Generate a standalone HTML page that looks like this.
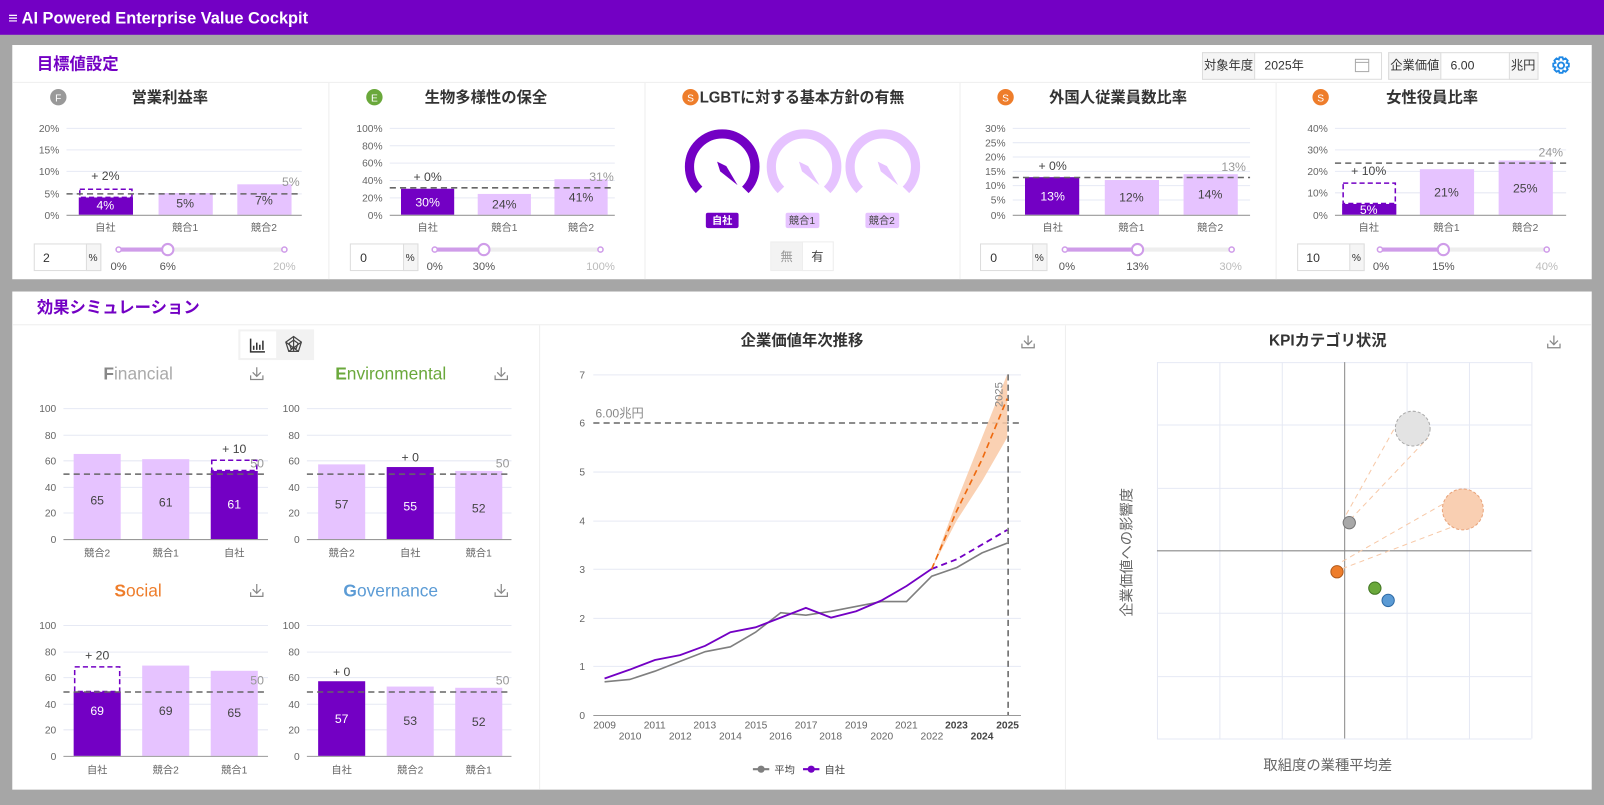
<!DOCTYPE html>
<html><head><meta charset="utf-8"><style>
html,body{margin:0;padding:0;background:#a6a6a6;width:1604px;height:805px;overflow:hidden}
svg{display:block;font-family:"Liberation Sans","Noto Sans CJK JP",sans-serif}
.y{font-size:10px;fill:#666;text-anchor:end}
.x{font-size:10px;fill:#666;text-anchor:middle}
.g{stroke:#e6e9f4;stroke-width:1}
.ax{stroke:#999;stroke-width:1}
.dl{stroke:#666;stroke-width:1.5;stroke-dasharray:6 4}
.c{text-anchor:middle}
.t{font-size:15px;font-weight:bold;fill:#333;text-anchor:middle}
.v{font-size:12px;text-anchor:middle;fill:#444}
.w{font-size:12px;text-anchor:middle;fill:#fff}
</style></head><body>
<svg width="1604" height="805" viewBox="0 0 1568 787" preserveAspectRatio="none">
<defs>
<g id="dl"><path d="M0 -6 V3 M-4 -1 L0 3 L4 -1 M-6 2 V6 H6 V2" fill="none" stroke="#888" stroke-width="1.2"/></g>
</defs>
<rect width="1568" height="787" fill="#a6a6a6"/>
<rect width="1568" height="34" fill="#7300c4"/>
<text x="8" y="23" fill="#fff" font-size="16" font-weight="bold">≡  AI Powered Enterprise Value Cockpit</text>

<!-- Top panel -->
<rect x="12" y="44" width="1544" height="229" fill="#fff"/>
<text x="36" y="68" fill="#7300c4" font-size="16" font-weight="bold">目標値設定</text>
<line x1="12" y1="80.5" x2="1556" y2="80.5" stroke="#eee"/>
<g stroke="#eee"><line x1="321.5" y1="81" x2="321.5" y2="273"/><line x1="630.5" y1="81" x2="630.5" y2="273"/><line x1="938.5" y1="81" x2="938.5" y2="273"/><line x1="1247.5" y1="81" x2="1247.5" y2="273"/></g>

<rect x="1175.5" y="51.5" width="175" height="26" fill="#fff" stroke="#ddd"/>
<rect x="1175.5" y="51.5" width="51" height="26" fill="#f5f5f5" stroke="#ddd"/>
<text x="1201" y="68" font-size="12" fill="#333" class="c">対象年度</text>
<text x="1236" y="68" font-size="12" fill="#333">2025年</text>
<g fill="none" stroke="#aaa"><rect x="1325" y="58" width="13" height="12"/><line x1="1325" y1="61" x2="1338" y2="61"/></g>
<rect x="1357.5" y="51.5" width="146" height="26" fill="#fff" stroke="#ddd"/>
<rect x="1357.5" y="51.5" width="51" height="26" fill="#f5f5f5" stroke="#ddd"/>
<rect x="1475.5" y="51.5" width="28" height="26" fill="#f5f5f5" stroke="#ddd"/>
<text x="1383" y="68" font-size="12" fill="#333" class="c">企業価値</text>
<text x="1418" y="68" font-size="12" fill="#333">6.00</text>
<text x="1489" y="68" font-size="12" fill="#333" class="c">兆円</text>
<g transform="translate(1526,64)" fill="none" stroke="#1e88e5" stroke-width="1.8"><circle r="3"/><path d="M-1.5 -8 h3 l.7 2.2 2.2 -1.1 2.1 2.1 -1.1 2.2 2.2 .7 v3 l-2.2 .7 1.1 2.2 -2.1 2.1 -2.2 -1.1 -.7 2.2 h-3 l-.7 -2.2 -2.2 1.1 -2.1 -2.1 1.1 -2.2 -2.2 -.7 v-3 l2.2 -.7 -1.1 -2.2 2.1 -2.1 2.2 1.1z"/></g>

<!-- Col1 -->
<circle cx="57" cy="95" r="8" fill="#999"/><text x="57" y="99" font-size="10" fill="#fff" class="c">F</text>
<text x="166" y="100" class="t">営業利益率</text>
<g class="g"><line x1="65" y1="125.5" x2="295" y2="125.5"/><line x1="65" y1="146.5" x2="295" y2="146.5"/><line x1="65" y1="167.5" x2="295" y2="167.5"/><line x1="65" y1="189.5" x2="295" y2="189.5"/></g>
<text class="y" x="58" y="129">20%</text><text class="y" x="58" y="150">15%</text><text class="y" x="58" y="171">10%</text><text class="y" x="58" y="193">5%</text><text class="y" x="58" y="214">0%</text>
<rect x="77" y="193" width="53" height="17" fill="#7300c4"/>
<rect x="78" y="185" width="51" height="8" fill="#fff" stroke="#7300c4" stroke-width="1.5" stroke-dasharray="5 3"/>
<rect x="155" y="188.7" width="53" height="21.3" fill="#e6c3ff"/>
<rect x="232" y="180.2" width="53" height="29.8" fill="#e6c3ff"/>
<line x1="65" y1="189.5" x2="295" y2="189.5" class="dl"/>
<line x1="65" y1="210.5" x2="295" y2="210.5" class="ax"/>
<text x="103" y="176" class="v">+ 2%</text><text x="103" y="205" class="w">4%</text><text x="181" y="203" class="v">5%</text><text x="258" y="200" class="v">7%</text>
<text x="293" y="182" font-size="12" fill="#999" text-anchor="end">5%</text>
<text class="x" x="103" y="226">自社</text><text class="x" x="181" y="226">競合1</text><text class="x" x="258" y="226">競合2</text>
<rect x="33.5" y="238.5" width="65" height="26" fill="#fff" stroke="#ddd"/><rect x="84.5" y="238.5" width="14" height="26" fill="#f5f5f5" stroke="#ddd"/>
<text x="42" y="256" font-size="12" fill="#333">2</text><text x="91" y="255" font-size="10" fill="#333" class="c">%</text>
<line x1="116" y1="244" x2="278" y2="244" stroke="#eee" stroke-width="4"/><line x1="116" y1="244" x2="164" y2="244" stroke="#cf9ce9" stroke-width="4"/>
<circle cx="116" cy="244" r="2.5" fill="#fff" stroke="#cf9ce9" stroke-width="1.5"/><circle cx="278" cy="244" r="2.5" fill="#fff" stroke="#cf9ce9" stroke-width="1.5"/><circle cx="164" cy="244" r="5.5" fill="#fff" stroke="#cf9ce9" stroke-width="2"/>
<text x="116" y="264" font-size="11" fill="#555" class="c">0%</text><text x="164" y="264" font-size="11" fill="#555" class="c">6%</text><text x="278" y="264" font-size="11" fill="#bbb" class="c">20%</text>

<!-- Col2 -->
<circle cx="366" cy="95" r="8" fill="#6aa83b"/><text x="366" y="99" font-size="10" fill="#fff" class="c">E</text>
<text x="475" y="100" class="t">生物多様性の保全</text>
<g class="g"><line x1="381" y1="125.5" x2="601" y2="125.5"/><line x1="381" y1="142.5" x2="601" y2="142.5"/><line x1="381" y1="159.5" x2="601" y2="159.5"/><line x1="381" y1="176.5" x2="601" y2="176.5"/><line x1="381" y1="193.5" x2="601" y2="193.5"/></g>
<text class="y" x="374" y="129">100%</text><text class="y" x="374" y="146">80%</text><text class="y" x="374" y="163">60%</text><text class="y" x="374" y="180">40%</text><text class="y" x="374" y="197">20%</text><text class="y" x="374" y="214">0%</text>
<rect x="392" y="184.5" width="52" height="25.5" fill="#7300c4"/>
<rect x="467" y="189.6" width="52" height="20.4" fill="#e6c3ff"/>
<rect x="542" y="175.2" width="52" height="34.8" fill="#e6c3ff"/>
<line x1="381" y1="183.6" x2="601" y2="183.6" class="dl"/>
<line x1="381" y1="210.5" x2="601" y2="210.5" class="ax"/>
<text x="418" y="177" class="v">+ 0%</text><text x="418" y="202" class="w">30%</text><text x="493" y="204" class="v">24%</text><text x="568" y="197" class="v">41%</text>
<text x="600" y="177" font-size="12" fill="#999" text-anchor="end">31%</text>
<text class="x" x="418" y="226">自社</text><text class="x" x="493" y="226">競合1</text><text class="x" x="568" y="226">競合2</text>
<rect x="342.5" y="238.5" width="66" height="26" fill="#fff" stroke="#ddd"/><rect x="394.5" y="238.5" width="14" height="26" fill="#f5f5f5" stroke="#ddd"/>
<text x="352" y="256" font-size="12" fill="#333">0</text><text x="401" y="255" font-size="10" fill="#333" class="c">%</text>
<line x1="425" y1="244" x2="587" y2="244" stroke="#eee" stroke-width="4"/><line x1="425" y1="244" x2="473" y2="244" stroke="#cf9ce9" stroke-width="4"/>
<circle cx="425" cy="244" r="2.5" fill="#fff" stroke="#cf9ce9" stroke-width="1.5"/><circle cx="587" cy="244" r="2.5" fill="#fff" stroke="#cf9ce9" stroke-width="1.5"/><circle cx="473" cy="244" r="5.5" fill="#fff" stroke="#cf9ce9" stroke-width="2"/>
<text x="425" y="264" font-size="11" fill="#555" class="c">0%</text><text x="473" y="264" font-size="11" fill="#555" class="c">30%</text><text x="587" y="264" font-size="11" fill="#bbb" class="c">100%</text>

<!-- Col3 gauges -->
<circle cx="675" cy="95" r="8" fill="#ee7d2b"/><text x="675" y="99" font-size="10" fill="#fff" class="c">S</text>
<text x="684" y="100" font-size="15" font-weight="bold" fill="#333" textLength="200" lengthAdjust="spacingAndGlyphs">LGBTに対する基本方針の有無</text>
<g fill="none" stroke-width="9">
<path d="M683.4 185.6 A32 32 0 1 1 728.6 185.6" stroke="#7300c4"/>
<path d="M763.4 185.6 A32 32 0 1 1 808.6 185.6" stroke="#e6c3ff"/>
<path d="M840.4 185.6 A32 32 0 1 1 885.6 185.6" stroke="#e6c3ff"/>
</g>
<polygon points="701,158 710,162.4 721,181 704,167.6" fill="#7300c4"/>
<polygon points="781,158 790,162.4 801,181 784,167.6" fill="#e6c3ff"/>
<polygon points="858,158 867,162.4 878,181 861,167.6" fill="#e6c3ff"/>
<rect x="690" y="208" width="32" height="15" rx="2" fill="#7300c4"/><text x="706" y="219" font-size="10" fill="#fff" class="c" font-weight="bold">自社</text>
<rect x="768" y="208" width="33" height="15" rx="2" fill="#e6c3ff"/><text x="784" y="219" font-size="10" fill="#444" class="c">競合1</text>
<rect x="846" y="208" width="33" height="15" rx="2" fill="#e6c3ff"/><text x="862" y="219" font-size="10" fill="#444" class="c">競合2</text>
<rect x="753.5" y="236.5" width="61" height="28" fill="#f3f3f3" stroke="#eee"/><rect x="784.5" y="236.5" width="30" height="28" fill="#fff" stroke="#eee"/>
<text x="769" y="255" font-size="12" fill="#999" class="c">無</text><text x="799" y="255" font-size="12" fill="#444" class="c">有</text>

<!-- Col4 -->
<circle cx="983" cy="95" r="8" fill="#ee7d2b"/><text x="983" y="99" font-size="10" fill="#fff" class="c">S</text>
<text x="1093" y="100" class="t">外国人従業員数比率</text>
<g class="g"><line x1="990" y1="125.5" x2="1222" y2="125.5"/><line x1="990" y1="139.5" x2="1222" y2="139.5"/><line x1="990" y1="153.5" x2="1222" y2="153.5"/><line x1="990" y1="167.5" x2="1222" y2="167.5"/><line x1="990" y1="181.5" x2="1222" y2="181.5"/><line x1="990" y1="195.5" x2="1222" y2="195.5"/></g>
<text class="y" x="983" y="129">30%</text><text class="y" x="983" y="143">25%</text><text class="y" x="983" y="157">20%</text><text class="y" x="983" y="171">15%</text><text class="y" x="983" y="185">10%</text><text class="y" x="983" y="199">5%</text><text class="y" x="983" y="214">0%</text>
<rect x="1002" y="173.2" width="53" height="36.8" fill="#7300c4"/>
<rect x="1080" y="176" width="53" height="34" fill="#e6c3ff"/>
<rect x="1157" y="170.3" width="53" height="39.7" fill="#e6c3ff"/>
<line x1="990" y1="173.5" x2="1222" y2="173.5" class="dl"/>
<line x1="990" y1="210.5" x2="1222" y2="210.5" class="ax"/>
<text x="1029" y="166" class="v">+ 0%</text><text x="1029" y="196" class="w">13%</text><text x="1106" y="197" class="v">12%</text><text x="1183" y="194" class="v">14%</text>
<text x="1218" y="167" font-size="12" fill="#999" text-anchor="end">13%</text>
<text class="x" x="1029" y="226">自社</text><text class="x" x="1106" y="226">競合1</text><text class="x" x="1183" y="226">競合2</text>
<rect x="958.5" y="238.5" width="65" height="26" fill="#fff" stroke="#ddd"/><rect x="1009.5" y="238.5" width="14" height="26" fill="#f5f5f5" stroke="#ddd"/>
<text x="968" y="256" font-size="12" fill="#333">0</text><text x="1016" y="255" font-size="10" fill="#333" class="c">%</text>
<line x1="1041" y1="244" x2="1204" y2="244" stroke="#eee" stroke-width="4"/><line x1="1041" y1="244" x2="1112" y2="244" stroke="#cf9ce9" stroke-width="4"/>
<circle cx="1041" cy="244" r="2.5" fill="#fff" stroke="#cf9ce9" stroke-width="1.5"/><circle cx="1204" cy="244" r="2.5" fill="#fff" stroke="#cf9ce9" stroke-width="1.5"/><circle cx="1112" cy="244" r="5.5" fill="#fff" stroke="#cf9ce9" stroke-width="2"/>
<text x="1043" y="264" font-size="11" fill="#555" class="c">0%</text><text x="1112" y="264" font-size="11" fill="#555" class="c">13%</text><text x="1203" y="264" font-size="11" fill="#bbb" class="c">30%</text>

<!-- Col5 -->
<circle cx="1291" cy="95" r="8" fill="#ee7d2b"/><text x="1291" y="99" font-size="10" fill="#fff" class="c">S</text>
<text x="1400" y="100" class="t">女性役員比率</text>
<g class="g"><line x1="1305" y1="125.5" x2="1531" y2="125.5"/><line x1="1305" y1="146.5" x2="1531" y2="146.5"/><line x1="1305" y1="167.5" x2="1531" y2="167.5"/><line x1="1305" y1="188.5" x2="1531" y2="188.5"/></g>
<text class="y" x="1298" y="129">40%</text><text class="y" x="1298" y="150">30%</text><text class="y" x="1298" y="171">20%</text><text class="y" x="1298" y="192">10%</text><text class="y" x="1298" y="214">0%</text>
<rect x="1312" y="199.4" width="53" height="10.6" fill="#7300c4"/>
<rect x="1313" y="179" width="51" height="20" fill="#fff" stroke="#7300c4" stroke-width="1.5" stroke-dasharray="5 3"/>
<rect x="1388" y="165.4" width="53" height="44.6" fill="#e6c3ff"/>
<rect x="1465" y="156.9" width="53" height="53.1" fill="#e6c3ff"/>
<line x1="1305" y1="159.5" x2="1531" y2="159.5" class="dl"/>
<line x1="1305" y1="210.5" x2="1531" y2="210.5" class="ax"/>
<text x="1338" y="171" class="v">+ 10%</text><text x="1338" y="209" class="w">5%</text><text x="1414" y="192" class="v">21%</text><text x="1491" y="188" class="v">25%</text>
<text x="1528" y="153" font-size="12" fill="#999" text-anchor="end">24%</text>
<text class="x" x="1338" y="226">自社</text><text class="x" x="1414" y="226">競合1</text><text class="x" x="1491" y="226">競合2</text>
<rect x="1268.5" y="238.5" width="65" height="26" fill="#fff" stroke="#ddd"/><rect x="1319.5" y="238.5" width="14" height="26" fill="#f5f5f5" stroke="#ddd"/>
<text x="1277" y="256" font-size="12" fill="#333">10</text><text x="1326" y="255" font-size="10" fill="#333" class="c">%</text>
<line x1="1349" y1="244" x2="1512" y2="244" stroke="#eee" stroke-width="4"/><line x1="1349" y1="244" x2="1411" y2="244" stroke="#cf9ce9" stroke-width="4"/>
<circle cx="1349" cy="244" r="2.5" fill="#fff" stroke="#cf9ce9" stroke-width="1.5"/><circle cx="1512" cy="244" r="2.5" fill="#fff" stroke="#cf9ce9" stroke-width="1.5"/><circle cx="1411" cy="244" r="5.5" fill="#fff" stroke="#cf9ce9" stroke-width="2"/>
<text x="1350" y="264" font-size="11" fill="#555" class="c">0%</text><text x="1411" y="264" font-size="11" fill="#555" class="c">15%</text><text x="1512" y="264" font-size="11" fill="#bbb" class="c">40%</text>

<!-- Bottom panel -->
<rect x="12" y="285" width="1544" height="487" fill="#fff"/>
<text x="36" y="306" fill="#7300c4" font-size="16" font-weight="bold">効果シミュレーション</text>
<line x1="12" y1="317.5" x2="1556" y2="317.5" stroke="#eee"/>
<line x1="527.5" y1="318" x2="527.5" y2="772" stroke="#eee"/><line x1="1041.5" y1="318" x2="1041.5" y2="772" stroke="#eee"/>
<rect x="233" y="322" width="74" height="30" fill="#f2f2f2"/><rect x="235" y="324" width="35" height="26" fill="#fff"/>
<path d="M245 331 V344 H259 M248 342 V338 M251 342 V335 M254 342 V337 M257 342 V333" stroke="#333" stroke-width="1.5" fill="none"/>
<g transform="translate(287,337)" fill="none" stroke="#444" stroke-width="1.2"><polygon points="0,-8 7.6,-2.5 4.7,6.5 -4.7,6.5 -7.6,-2.5"/><polygon points="0,-4.5 4.3,-1.4 2.6,3.6 -2.6,3.6 -4.3,-1.4"/><path d="M0 -8 V6.5 M-7.6 -2.5 L4.7 6.5 M7.6 -2.5 L-4.7 6.5"/></g>

<!-- Financial -->
<text x="135" y="371" class="c" font-size="17" fill="#aaa"><tspan fill="#888" font-weight="bold">F</tspan>inancial</text>
<use href="#dl" x="251" y="365"/>
<g class="g"><line x1="62" y1="399.5" x2="262" y2="399.5"/><line x1="62" y1="425.5" x2="262" y2="425.5"/><line x1="62" y1="450.5" x2="262" y2="450.5"/><line x1="62" y1="476.5" x2="262" y2="476.5"/><line x1="62" y1="501.5" x2="262" y2="501.5"/></g>
<text class="y" x="55" y="403">100</text><text class="y" x="55" y="429">80</text><text class="y" x="55" y="454">60</text><text class="y" x="55" y="480">40</text><text class="y" x="55" y="505">20</text><text class="y" x="55" y="531">0</text>
<rect x="72" y="443.8" width="46" height="83.2" fill="#e6c3ff"/><rect x="139" y="448.9" width="46" height="78.1" fill="#e6c3ff"/>
<rect x="206" y="460.4" width="46" height="66.6" fill="#7300c4"/><rect x="207" y="450" width="44" height="10" fill="#fff" stroke="#7300c4" stroke-width="1.5" stroke-dasharray="5 3"/>
<line x1="62" y1="463.5" x2="262" y2="463.5" class="dl"/><line x1="62" y1="527.5" x2="262" y2="527.5" class="ax"/>
<text x="95" y="493" class="v">65</text><text x="162" y="495" class="v">61</text><text x="229" y="497" class="w">61</text>
<text x="229" y="443" class="v">+ 10</text><text x="258" y="457" font-size="12" fill="#999" text-anchor="end">50</text>
<text class="x" x="95" y="544">競合2</text><text class="x" x="162" y="544">競合1</text><text class="x" x="229" y="544">自社</text>

<!-- Environmental -->
<text x="382" y="371" class="c" font-size="17" fill="#6aa83b"><tspan font-weight="bold">E</tspan>nvironmental</text>
<use href="#dl" x="490" y="365"/>
<g class="g"><line x1="300" y1="399.5" x2="500" y2="399.5"/><line x1="300" y1="425.5" x2="500" y2="425.5"/><line x1="300" y1="450.5" x2="500" y2="450.5"/><line x1="300" y1="476.5" x2="500" y2="476.5"/><line x1="300" y1="501.5" x2="500" y2="501.5"/></g>
<text class="y" x="293" y="403">100</text><text class="y" x="293" y="429">80</text><text class="y" x="293" y="454">60</text><text class="y" x="293" y="480">40</text><text class="y" x="293" y="505">20</text><text class="y" x="293" y="531">0</text>
<rect x="311" y="454" width="46" height="73" fill="#e6c3ff"/><rect x="378" y="456.6" width="46" height="70.4" fill="#7300c4"/><rect x="445" y="460.4" width="46" height="66.6" fill="#e6c3ff"/>
<line x1="300" y1="463.5" x2="500" y2="463.5" class="dl"/><line x1="300" y1="527.5" x2="500" y2="527.5" class="ax"/>
<text x="334" y="497" class="v">57</text><text x="401" y="499" class="w">55</text><text x="468" y="501" class="v">52</text>
<text x="401" y="451" class="v">+ 0</text><text x="498" y="457" font-size="12" fill="#999" text-anchor="end">50</text>
<text class="x" x="334" y="544">競合2</text><text class="x" x="401" y="544">自社</text><text class="x" x="468" y="544">競合1</text>

<!-- Social -->
<text x="135" y="583" class="c" font-size="17" fill="#ee7d2b"><tspan font-weight="bold">S</tspan>ocial</text>
<use href="#dl" x="251" y="577"/>
<g class="g"><line x1="62" y1="611.5" x2="262" y2="611.5"/><line x1="62" y1="637.5" x2="262" y2="637.5"/><line x1="62" y1="662.5" x2="262" y2="662.5"/><line x1="62" y1="688.5" x2="262" y2="688.5"/><line x1="62" y1="713.5" x2="262" y2="713.5"/></g>
<text class="y" x="55" y="615">100</text><text class="y" x="55" y="641">80</text><text class="y" x="55" y="666">60</text><text class="y" x="55" y="692">40</text><text class="y" x="55" y="717">20</text><text class="y" x="55" y="743">0</text>
<rect x="72" y="676.3" width="46" height="62.7" fill="#7300c4"/><rect x="73" y="652" width="44" height="24" fill="#fff" stroke="#7300c4" stroke-width="1.5" stroke-dasharray="5 3"/>
<rect x="139" y="650.7" width="46" height="88.3" fill="#e6c3ff"/><rect x="206" y="655.8" width="46" height="83.2" fill="#e6c3ff"/>
<line x1="62" y1="676.5" x2="262" y2="676.5" class="dl"/><line x1="62" y1="739.5" x2="262" y2="739.5" class="ax"/>
<text x="95" y="699" class="w">69</text><text x="162" y="699" class="v">69</text><text x="229" y="701" class="v">65</text>
<text x="95" y="645" class="v">+ 20</text><text x="258" y="669" font-size="12" fill="#999" text-anchor="end">50</text>
<text class="x" x="95" y="756">自社</text><text class="x" x="162" y="756">競合2</text><text class="x" x="229" y="756">競合1</text>

<!-- Governance -->
<text x="382" y="583" class="c" font-size="17" fill="#5b9bd5"><tspan font-weight="bold">G</tspan>overnance</text>
<use href="#dl" x="490" y="577"/>
<g class="g"><line x1="300" y1="611.5" x2="500" y2="611.5"/><line x1="300" y1="637.5" x2="500" y2="637.5"/><line x1="300" y1="662.5" x2="500" y2="662.5"/><line x1="300" y1="688.5" x2="500" y2="688.5"/><line x1="300" y1="713.5" x2="500" y2="713.5"/></g>
<text class="y" x="293" y="615">100</text><text class="y" x="293" y="641">80</text><text class="y" x="293" y="666">60</text><text class="y" x="293" y="692">40</text><text class="y" x="293" y="717">20</text><text class="y" x="293" y="743">0</text>
<rect x="311" y="666" width="46" height="73" fill="#7300c4"/><rect x="378" y="671.2" width="46" height="67.8" fill="#e6c3ff"/><rect x="445" y="672.4" width="46" height="66.6" fill="#e6c3ff"/>
<line x1="300" y1="676.5" x2="500" y2="676.5" class="dl"/><line x1="300" y1="739.5" x2="500" y2="739.5" class="ax"/>
<text x="334" y="707" class="w">57</text><text x="401" y="709" class="v">53</text><text x="468" y="710" class="v">52</text>
<text x="334" y="661" class="v">+ 0</text><text x="498" y="669" font-size="12" fill="#999" text-anchor="end">50</text>
<text class="x" x="334" y="756">自社</text><text class="x" x="401" y="756">競合2</text><text class="x" x="468" y="756">競合1</text>

<!-- Line chart -->
<text x="784" y="338" class="t" font-size="14">企業価値年次推移</text>
<use href="#dl" x="1005" y="334"/>
<g class="g"><line x1="580" y1="366.5" x2="998" y2="366.5"/><line x1="580" y1="461.5" x2="998" y2="461.5"/><line x1="580" y1="509.5" x2="998" y2="509.5"/><line x1="580" y1="556.5" x2="998" y2="556.5"/><line x1="580" y1="604.5" x2="998" y2="604.5"/><line x1="580" y1="651.5" x2="998" y2="651.5"/></g>
<text class="y" x="572" y="370">7</text><text class="y" x="572" y="417">6</text><text class="y" x="572" y="465">5</text><text class="y" x="572" y="513">4</text><text class="y" x="572" y="560">3</text><text class="y" x="572" y="608">2</text><text class="y" x="572" y="655">1</text><text class="y" x="572" y="703">0</text>
<line x1="580" y1="699.5" x2="998" y2="699.5" class="ax"/>
<line x1="580" y1="413.5" x2="998" y2="413.5" class="dl"/>
<text x="582" y="408" font-size="12" fill="#888">6.00兆円</text>
<polygon points="910.8,556.2 935.4,489.6 960,427.7 984.6,366 984.6,427.7 960,470.5 935.4,508.6" fill="#f9c9a6" opacity="0.85"/>
<line x1="985.5" y1="366" x2="985.5" y2="699" class="dl"/>
<text transform="translate(980,398) rotate(-90)" font-size="11" fill="#888">2025</text>
<polyline fill="none" stroke="#7f7f7f" stroke-width="1.6" points="591,666.6 615.6,664.3 640.2,656.2 664.8,646.6 689.4,637.1 714,632.4 738.6,618.1 763.2,599 787.8,601.4 812.4,597.6 837,592.9 861.6,588.1 886.2,588.1 910.8,563.3 935.4,554.8 960,540.5 984.6,531"/>
<polyline fill="none" stroke="#7300c4" stroke-width="1.8" points="591,663.3 615.6,654.7 640.2,645.2 664.8,640.5 689.4,631.4 714,618.1 738.6,613.3 763.2,603.8 787.8,594.3 812.4,603.8 837,597.6 861.6,587.1 886.2,572.9 910.8,556.2"/>
<polyline fill="none" stroke="#7300c4" stroke-width="1.8" stroke-dasharray="6 4" points="910.8,556.2 935.4,546.7 960,532.4 984.6,518.1"/>
<polyline fill="none" stroke="#ee6a10" stroke-width="1.6" stroke-dasharray="6 4" points="910.8,556.2 935.4,499.1 960,449.1 984.6,389.6"/>
<g font-size="10" fill="#666" text-anchor="middle">
<text x="591" y="712">2009</text><text x="640" y="712">2011</text><text x="689" y="712">2013</text><text x="739" y="712">2015</text><text x="788" y="712">2017</text><text x="837" y="712">2019</text><text x="886" y="712">2021</text><text x="935" y="712" font-weight="bold" fill="#444">2023</text><text x="985" y="712" font-weight="bold" fill="#444">2025</text>
<text x="616" y="723">2010</text><text x="665" y="723">2012</text><text x="714" y="723">2014</text><text x="763" y="723">2016</text><text x="812" y="723">2018</text><text x="862" y="723">2020</text><text x="911" y="723">2022</text><text x="960" y="723" font-weight="bold" fill="#444">2024</text>
</g>
<line x1="736" y1="752" x2="752" y2="752" stroke="#7f7f7f" stroke-width="2"/><circle cx="744" cy="752" r="3.5" fill="#7f7f7f"/><text x="757" y="756" font-size="10" fill="#444">平均</text>
<line x1="785" y1="752" x2="801" y2="752" stroke="#7300c4" stroke-width="2"/><circle cx="793" cy="752" r="3.5" fill="#7300c4"/><text x="806" y="756" font-size="10" fill="#444">自社</text>

<!-- KPI scatter -->
<text x="1298" y="338" class="t" font-size="14">KPIカテゴリ状況</text>
<use href="#dl" x="1519" y="334"/>
<g stroke="#e6e9f4"><line x1="1131.5" y1="354" x2="1131.5" y2="722"/><line x1="1192.5" y1="354" x2="1192.5" y2="722"/><line x1="1253.5" y1="354" x2="1253.5" y2="722"/><line x1="1375.5" y1="354" x2="1375.5" y2="722"/><line x1="1436.5" y1="354" x2="1436.5" y2="722"/><line x1="1497.5" y1="354" x2="1497.5" y2="722"/>
<line x1="1131" y1="354.5" x2="1497" y2="354.5"/><line x1="1131" y1="415.5" x2="1497" y2="415.5"/><line x1="1131" y1="477.5" x2="1497" y2="477.5"/><line x1="1131" y1="599.5" x2="1497" y2="599.5"/><line x1="1131" y1="661.5" x2="1497" y2="661.5"/><line x1="1131" y1="722.5" x2="1497" y2="722.5"/></g>
<line x1="1314.5" y1="354" x2="1314.5" y2="722" stroke="#888"/><line x1="1131" y1="538.5" x2="1497" y2="538.5" stroke="#888"/>
<g stroke="#f7c9a8" stroke-dasharray="5 4" fill="none"><line x1="1316" y1="503" x2="1368" y2="410"/><line x1="1320" y1="508" x2="1396" y2="428"/><line x1="1312" y1="549" x2="1412" y2="492"/><line x1="1312" y1="556" x2="1420" y2="515"/></g>
<circle cx="1381" cy="419" r="17" fill="#e3e3e3" stroke="#aaa" stroke-dasharray="3 2"/>
<circle cx="1430" cy="498" r="20" fill="#f9cfb2" stroke="#e8a37a" stroke-dasharray="3 2"/>
<circle cx="1319" cy="511" r="6" fill="#a8a8a8" stroke="#777"/>
<circle cx="1307" cy="559" r="6" fill="#ee7d2b" stroke="#b05a1c"/>
<circle cx="1344" cy="575" r="6" fill="#6aa83b" stroke="#3f7320"/>
<circle cx="1357" cy="587" r="6" fill="#5b9bd5" stroke="#2e6aa5"/>
<text transform="translate(1106,540) rotate(-90)" font-size="14" fill="#666" text-anchor="middle">企業価値への影響度</text>
<text x="1298" y="753" font-size="14" fill="#666" text-anchor="middle">取組度の業種平均差</text>
</svg>
</body></html>
